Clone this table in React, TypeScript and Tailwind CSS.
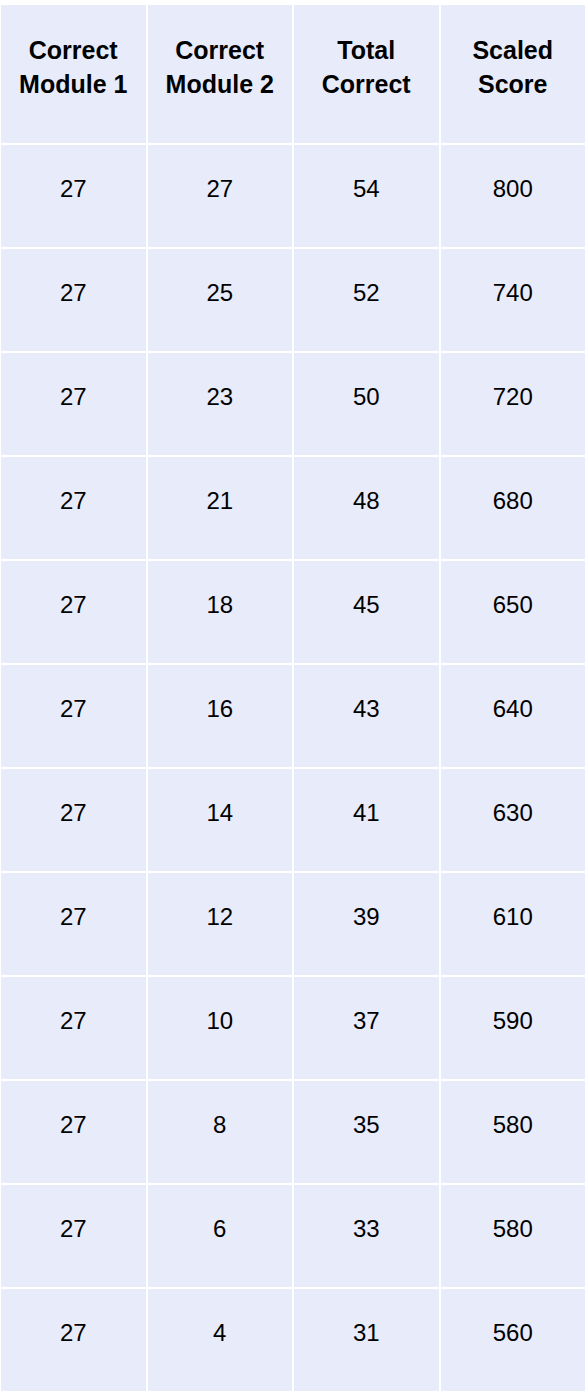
const headers = [
  ['Correct', 'Module 1'],
  ['Correct', 'Module 2'],
  ['Total', 'Correct'],
  ['Scaled', 'Score'],
];

const rows: [number, number, number, number][] = [
  [27, 27, 54, 800],
  [27, 25, 52, 740],
  [27, 23, 50, 720],
  [27, 21, 48, 680],
  [27, 18, 45, 650],
  [27, 16, 43, 640],
  [27, 14, 41, 630],
  [27, 12, 39, 610],
  [27, 10, 37, 590],
  [27, 8, 35, 580],
  [27, 6, 33, 580],
  [27, 4, 31, 560],
];

export default function App() {
  return (
    <div
      className="min-h-[1396px] w-[588px] bg-white pt-[5px] pl-[1px] text-black"
      style={{ fontFamily: '"Liberation Sans", Arial, sans-serif' }}
    >
      <div className="grid w-[584px] grid-cols-4 gap-[2px]">
        {/* Header */}
        {headers.map((h, i) => (
          <div
            key={`h-${i}`}
            className="h-[138px] bg-[#e8ebf9] pt-[28px] text-center text-[25px] font-bold leading-[34px]"
          >
            <div>{h[0]}</div>
            <div>{h[1]}</div>
          </div>
        ))}

        {/* Rows */}
        {rows.map((row, r) =>
          row.map((val, c) => (
            <div
              key={`${r}-${c}`}
              className="h-[102px] bg-[#e8ebf9] pt-[27px] text-center text-[24px] leading-[34px]"
            >
              {val}
            </div>
          ))
        )}
      </div>
    </div>
  );
}
